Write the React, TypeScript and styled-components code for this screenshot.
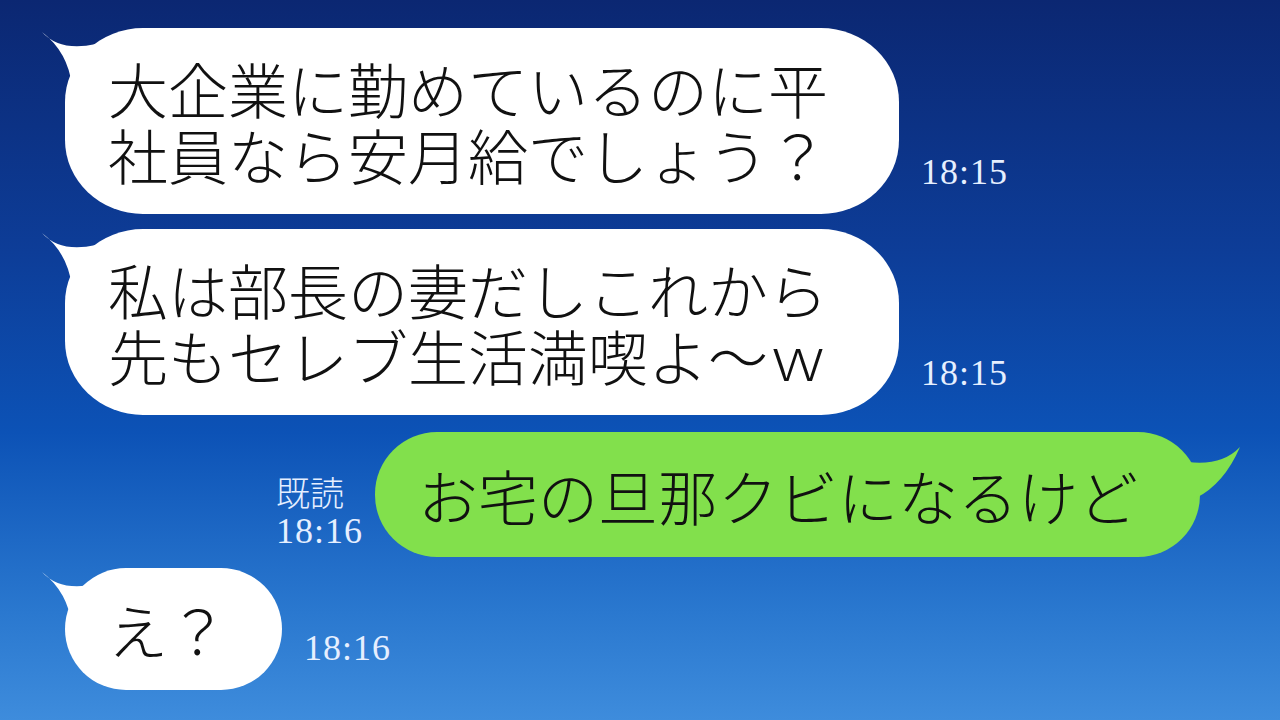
import * as React from 'react'
import { FC } from 'react'
import styled, { createGlobalStyle } from 'styled-components'

const GlobalStyle = createGlobalStyle`
    html, body {
        margin: 0;
        padding: 0;
    }
    body {
        width: 1280px;
        height: 720px;
        overflow: hidden;
    }
`

type Msg = {
    id: number
    mine?: boolean
    lines: string[]
    time: string
    read?: boolean
}

const messages: Msg[] = [
    { id: 1, lines: ['大企業に勤めているのに平', '社員なら安月給でしょう？'], time: '18:15' },
    { id: 2, lines: ['私は部長の妻だしこれから', '先もセレブ生活満喫よ～ｗ'], time: '18:15' },
    { id: 3, mine: true, lines: ['お宅の旦那クビになるけど'], time: '18:16', read: true },
    { id: 4, lines: ['え？'], time: '18:16' },
]

// horn shaped tail, drawn over the bubble corner
const Tail: FC<{ mine?: boolean }> = ({ mine }) =>
    mine ? (
        <TailSvg mine width="60" height="70" viewBox="0 0 60 70">
            <path d="M56,15 Q38,34 4,30 L4,66 L12,66 Q40,52 56,15 Z" />
        </TailSvg>
    ) : (
        <TailSvg width="70" height="60" viewBox="0 0 70 60">
            <path d="M4,4 Q22,24 58,16 L58,58 L34,58 Q30,24 4,4 Z" />
        </TailSvg>
    )

const App: FC = () => {
    return (
        <Screen>
            <GlobalStyle />
            {messages.map((m, i) => (
                <Row key={m.id} mine={m.mine} tight={i === 3}>
                    {m.mine && (
                        <Meta mine>
                            {m.read && <Read>既読</Read>}
                            <span>{m.time}</span>
                        </Meta>
                    )}
                    <Bubble mine={m.mine} tall={m.lines.length > 1}>
                        <Tail mine={m.mine} />
                        <Text>
                            {m.lines.map((l, j) => (
                                <React.Fragment key={l}>
                                    {j > 0 && <br />}
                                    {l}
                                </React.Fragment>
                            ))}
                        </Text>
                    </Bubble>
                    {!m.mine && <Meta>{m.time}</Meta>}
                </Row>
            ))}
        </Screen>
    )
}

const Screen = styled.div`
    width: 1280px;
    height: 720px;
    box-sizing: border-box;
    padding: 28px 0 0 0;
    display: flex;
    flex-direction: column;
    gap: 15px;
    background: linear-gradient(180deg, #0b2772 0%, #0d3d98 35%, #0c52b6 60%, #2a78cf 85%, #3e8cdc 100%);
    font-family: "Noto Sans CJK JP", sans-serif;
`

const Row = styled.div<{ mine?: boolean; tight?: boolean }>`
    display: flex;
    align-items: flex-end;
    justify-content: ${p => (p.mine ? 'flex-end' : 'flex-start')};
    padding: ${p => (p.mine ? '2px 80px 0 0' : '0 0 0 65px')};
    margin-top: ${p => (p.tight ? '-4px' : '0')};
`

const Bubble = styled.div<{ mine?: boolean; tall?: boolean }>`
    position: relative;
    box-sizing: border-box;
    display: flex;
    align-items: center;
    height: ${p => (p.tall ? '186px' : p.mine ? '125px' : '122px')};
    padding: ${p => (p.mine ? '0 62px 0 43px' : p.tall ? '0 71px 0 43px' : '0 54px 0 43px')};
    border-radius: ${p => (p.tall ? '78px / 74px' : '62px')};
    background: ${p => (p.mine ? '#82e04c' : '#ffffff')};
    color: #111;
`

const TailSvg = styled.svg<{ mine?: boolean }>`
    position: absolute;
    top: 0;
    ${p => (p.mine ? 'right: -44px;' : 'left: -27px;')}
    fill: ${p => (p.mine ? '#82e04c' : '#ffffff')};
`

const Text = styled.div`
    position: relative;
    font-size: 60px;
    line-height: 66px;
    font-weight: 300;
    white-space: nowrap;
`

const Meta = styled.div<{ mine?: boolean }>`
    display: flex;
    flex-direction: column;
    align-items: flex-start;
    font-family: "Liberation Serif", serif;
    font-size: 36px;
    line-height: 40px;
    letter-spacing: 1px;
    color: #e6efff;
    margin: ${p => (p.mine ? '0 12px 6px 0' : '0 0 22px 22px')};
`

const Read = styled.span`
    font-family: "Noto Sans CJK JP", sans-serif;
    font-size: 34px;
    line-height: 38px;
    font-weight: 300;
    letter-spacing: 0;
`

export default App
